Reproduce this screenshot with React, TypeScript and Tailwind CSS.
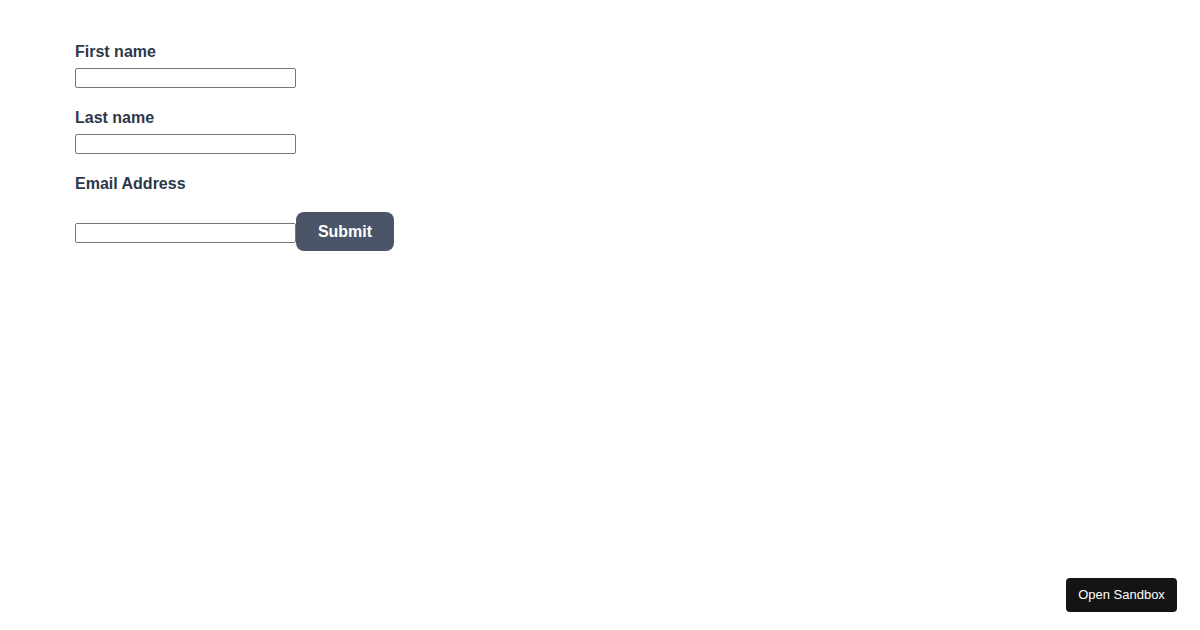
export default function App() {
  return (
    <div className="relative h-[630px] w-[1200px] bg-white font-['Liberation_Sans',Arial,sans-serif]">
      <form className="px-[75px] pt-[40px]" onSubmit={(e) => e.preventDefault()}>
        <label htmlFor="first" className="block text-base font-bold leading-6 text-[#2d3748]">
          First name
        </label>
        <input id="first" type="text" className="mt-[4px] block h-[20px] w-[221px] rounded-[2px] border border-[#767676]" />

        <label htmlFor="last" className="mt-[18px] block text-base font-bold leading-6 text-[#2d3748]">
          Last name
        </label>
        <input id="last" type="text" className="mt-[4px] block h-[20px] w-[221px] rounded-[2px] border border-[#767676]" />

        <label htmlFor="email" className="mt-[18px] block text-base font-bold leading-6 text-[#2d3748]">
          Email Address
        </label>
        <div className="mt-[16px] flex items-start">
          <input id="email" type="email" className="mt-[11px] h-[20px] w-[221px] rounded-[2px] border border-[#767676]" />
          <button type="submit" className="h-[39px] w-[98px] rounded-lg bg-[#4a5568] text-base font-bold text-white">
            Submit
          </button>
        </div>
      </form>

      <button className="absolute right-[23px] bottom-[18px] h-[34px] w-[111px] rounded-[4px] bg-[#141414] text-[13px] text-white">
        Open Sandbox
      </button>
    </div>
  );
}
